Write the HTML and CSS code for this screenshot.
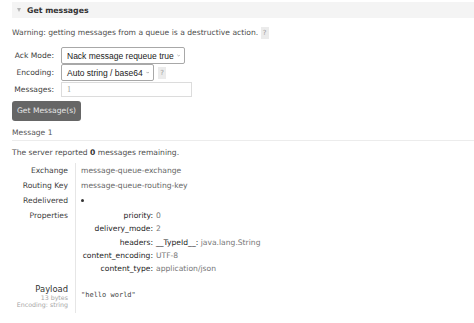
FILE: index.html
```html
<!DOCTYPE html>
<html>
<head>
<meta charset="utf-8">
<link rel="stylesheet" href="styles.css">
</head>
<body>
<div class="section">
  <div class="section-head"><span class="tri"></span><span class="title">Get messages</span></div>
  <div class="section-body">
    <p class="warning">Warning: getting messages from a queue is a destructive action. <span class="help">?</span></p>
    <div class="form">
      <label class="flabel">Ack Mode:</label>
      <div class="fval"><span class="select sel-ack">Nack message requeue true <svg class="chev" viewBox="0 0 8 5" width="7" height="5"><path d="M1 1 L4 4 L7 1" fill="none" stroke="#444" stroke-width="1"/></svg></span></div>
      <label class="flabel">Encoding:</label>
      <div class="fval"><span class="select sel-enc">Auto string / base64 <svg class="chev" viewBox="0 0 8 5" width="7" height="5"><path d="M1 1 L4 4 L7 1" fill="none" stroke="#444" stroke-width="1"/></svg></span><span class="help">?</span></div>
      <label class="flabel">Messages:</label>
      <div class="fval"><span class="input">1</span></div>
    </div>
    <div class="btn">Get Message(s)</div>
    <h3 class="msg-title">Message 1</h3>
    <p class="remaining">The server reported <b>0</b> messages remaining.</p>
    <div class="facts">
      <div class="keys">
        <div class="k">Exchange</div>
        <div class="k">Routing Key</div>
        <div class="k">Redelivered</div>
        <div class="k">Properties</div>
        <div class="k payload">Payload<div class="sub">13 bytes</div><div class="sub">Encoding: string</div></div>
      </div>
      <div class="vals">
        <div class="v">message-queue-exchange</div>
        <div class="v">message-queue-routing-key</div>
        <div class="v"><span class="dot"></span></div>
        <div class="props">
          <div class="pk">priority:</div><div class="pv">0</div>
          <div class="pk">delivery_mode:</div><div class="pv">2</div>
          <div class="pk">headers:</div><div class="pv"><span class="hk">__TypeId__:</span> java.lang.String</div>
          <div class="pk">content_encoding:</div><div class="pv">UTF-8</div>
          <div class="pk">content_type:</div><div class="pv">application/json</div>
        </div>
        <pre class="payload-text">"hello world"</pre>
      </div>
    </div>
  </div>
</div>
</body>
</html>
```
FILE: styles.css
```css
html, body {
  margin: 0;
  padding: 0;
  background: #fff;
}
body {
  font-family: "DejaVu Sans", Verdana, sans-serif;
  font-size: 7.6px;
  color: #4d4d4d;
}
.section {
  padding-top: 2px;
  padding-left: 12px;
}
.section-head {
  height: 16px;
  background: #f4f4f4;
  display: flex;
  align-items: center;
  padding-left: 5px;
  gap: 6px;
}
.tri {
  width: 0;
  height: 0;
  border-left: 2.5px solid transparent;
  border-right: 2.5px solid transparent;
  border-top: 4px solid #b5b5b5;
}
.title {
  font-weight: bold;
  font-size: 7.8px;
  color: #333;
}
.warning {
  margin: 9px 0 0 0;
  line-height: 12px;
  height: 12px;
  color: #4d4d4d;
  white-space: nowrap;
}
.help {
  display: inline-block;
  width: 8px;
  height: 12px;
  background: #ebebeb;
  color: #9a9a9a;
  text-align: center;
  line-height: 12px;
  font-size: 7px;
  vertical-align: top;
}
.form {
  display: grid;
  grid-template-columns: 42px auto;
  grid-auto-rows: 17px;
  column-gap: 7px;
  margin-top: 8px;
  align-items: center;
}
.flabel {
  text-align: right;
  color: #3d3d3d;
  white-space: nowrap;
}
.fval {
  display: flex;
  align-items: center;
  gap: 4px;
}
.select {
  display: inline-flex;
  align-items: center;
  justify-content: space-between;
  border: 1px solid #a8a8a8;
  border-radius: 2px;
  box-sizing: border-box;
  height: 17px;
  padding: 0 4px 0 5px;
  font-family: "Liberation Sans", Arial, sans-serif;
  font-size: 8.5px;
  color: #222;
  white-space: nowrap;
}
.sel-ack { width: 124px; }
.sel-enc { width: 93px; }
.chev {
  display: block;
  margin-left: 3px;
}
.input {
  display: block;
  width: 131px;
  height: 15px;
  box-sizing: border-box;
  border: 1px solid #dcdcdc;
  font-family: "Liberation Serif", serif;
  font-size: 8px;
  color: #999;
  padding-left: 5px;
  line-height: 13px;
}
.btn {
  display: block;
  margin-top: 3px;
  width: 69px;
  height: 20px;
  line-height: 20px;
  text-align: center;
  background: #666;
  color: #e6e6e6;
  border-radius: 3px;
  white-space: nowrap;
}
.msg-title {
  font-weight: normal;
  font-size: 7.6px;
  line-height: 12px;
  margin: 6px 0 0 0;
  padding-bottom: 1px;
  border-bottom: 1px solid #ececec;
  color: #555;
}
.remaining {
  margin: 6px 0 0 0;
  line-height: 12px;
  color: #4d4d4d;
}
.remaining b { color: #333; }
.facts {
  display: flex;
  margin-top: 4px;
}
.keys {
  width: 56px;
  padding-right: 7px;
  border-right: 1px solid #e6e6e6;
  text-align: right;
  padding-bottom: 5px;
  color: #3d3d3d;
  white-space: nowrap;
}
.k {
  height: 15px;
  line-height: 15px;
}
.k.payload {
  margin-top: 61px;
  height: auto;
  line-height: 10px;
  font-size: 8.4px;
  color: #333;
}
.sub {
  font-size: 6.3px;
  line-height: 7px;
  color: #a5a5a5;
}
.vals {
  padding-left: 5px;
  color: #666;
  white-space: nowrap;
}
.v {
  height: 15px;
  line-height: 15px;
}
.dot {
  display: inline-block;
  width: 3px;
  height: 3px;
  border-radius: 50%;
  background: #333;
  vertical-align: middle;
}
.props {
  display: grid;
  grid-template-columns: 72px auto;
  grid-auto-rows: 13.3px;
  column-gap: 3px;
  margin-top: 1px;
  align-items: center;
}
.pk {
  text-align: right;
  color: #262626;
}
.pv {
  color: #777;
}
.hk {
  color: #262626;
}
.payload-text {
  margin: 15px 0 0 0;
  line-height: 10px;
  font-family: "DejaVu Sans Mono", monospace;
  font-size: 7px;
  color: #444;
}
```
